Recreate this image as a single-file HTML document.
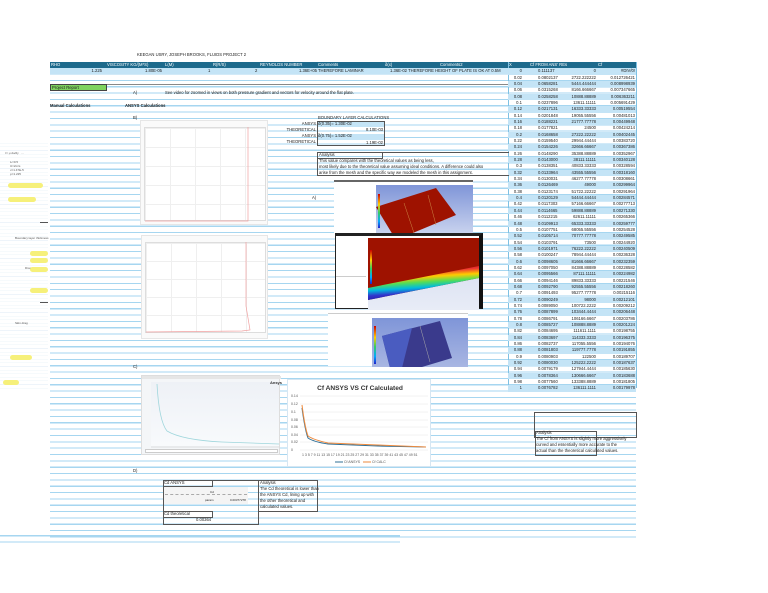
<!DOCTYPE html>
<html><head><meta charset="utf-8"><style>
*{margin:0;padding:0;box-sizing:border-box}
body{width:768px;height:593px;background:#fff;position:relative;overflow:hidden;font-family:"Liberation Sans",sans-serif;font-size:4.2px;color:#222}
.a{position:absolute;white-space:nowrap;line-height:6px}
.grid{position:absolute;background:repeating-linear-gradient(to bottom,transparent 0,transparent 5.2px,#a6d6f0 5.2px,#a6d6f0 6.34px)}
.hd{background:#1d6a8c;color:#fff;height:6.3px}
.tr{position:absolute;left:508px;width:128px;height:6.34px;line-height:6px}
.tr span{position:absolute;text-align:right}
.c1{right:114px}.c2{left:30px}.c3{right:40px}.c4{right:1px}
.b{background:#c4e4f6}
.box{position:absolute;border:1px solid #555}
</style></head><body>
<div class="grid" style="left:50px;top:62px;width:586px;height:480px"></div>
<div class="grid" style="left:0;top:530px;width:400px;height:14px"></div>
<div class="a" style="left:137px;top:52px">KEEGAN USRY, JOSEPH BROOKS, FLUIDS PROJECT 2</div>
<div class="a hd" style="left:50px;top:62px;width:586px"></div>
<div class="a" style="color:#fff;left:51px;top:62px">RHO</div>
<div class="a" style="color:#fff;left:107px;top:62px">VISCOSITY KG/(M*S)</div>
<div class="a" style="color:#fff;left:165px;top:62px">L(M)</div>
<div class="a" style="color:#fff;left:213px;top:62px">R(R/S)</div>
<div class="a" style="color:#fff;left:260px;top:62px">REYNOLDS NUMBER</div>
<div class="a" style="color:#fff;left:318px;top:62px">Comments</div>
<div class="a" style="color:#fff;left:385px;top:62px">δ(x)</div>
<div class="a" style="color:#fff;left:440px;top:62px">Comments2</div>
<div class="a" style="color:#fff;left:509px;top:62px">X</div>
<div class="a" style="color:#fff;left:530px;top:62px">Cf FROM ANS' REs</div>
<div class="a" style="color:#fff;left:598px;top:62px">Cf</div>
<div class="a b" style="left:50px;top:68.3px;width:458px;height:5.6px"></div>
<div class="a" style="left:90px;top:68px;width:12px;text-align:right">1.225</div>
<div class="a" style="left:140px;top:68px;width:22px;text-align:right">1.80E-05</div>
<div class="a" style="left:208px;top:68px">1</div>
<div class="a" style="left:255px;top:68px">2</div>
<div class="a" style="left:290px;top:68px;width:27px;text-align:right">1.36E+05</div>
<div class="a" style="left:318px;top:68px">THEREFORE LAMINAR</div>
<div class="a" style="left:390px;top:68px">1.36E-02 THEREFORE HEIGHT OF PLATE IS OK AT 0.5M</div>
<div style="position:absolute;left:508px;top:62px;width:129px;height:326px;border:1px solid #7fc1e3;border-top:0"></div>
<div class="tr b" style="top:68.3px"><span class="c1">0</span><span class="c2">0.111137</span><span class="c3">0</span><span class="c4">#DIV/0!</span></div>
<div class="tr" style="top:74.7px"><span class="c1">0.02</span><span class="c2">0.0802137</span><span class="c3">2722.222222</span><span class="c4">0.012726421</span></div>
<div class="tr b" style="top:81.0px"><span class="c1">0.04</span><span class="c2">0.0658281</span><span class="c3">5444.444444</span><span class="c4">0.008998939</span></div>
<div class="tr" style="top:87.3px"><span class="c1">0.06</span><span class="c2">0.0315268</span><span class="c3">8166.666667</span><span class="c4">0.007347665</span></div>
<div class="tr b" style="top:93.7px"><span class="c1">0.08</span><span class="c2">0.0258258</span><span class="c3">10888.88889</span><span class="c4">0.006363211</span></div>
<div class="tr" style="top:100.0px"><span class="c1">0.1</span><span class="c2">0.0237896</span><span class="c3">13611.11111</span><span class="c4">0.005691429</span></div>
<div class="tr b" style="top:106.3px"><span class="c1">0.12</span><span class="c2">0.0217131</span><span class="c3">16333.33333</span><span class="c4">0.00519554</span></div>
<div class="tr" style="top:112.7px"><span class="c1">0.14</span><span class="c2">0.0201848</span><span class="c3">19055.55556</span><span class="c4">0.00481013</span></div>
<div class="tr b" style="top:119.0px"><span class="c1">0.16</span><span class="c2">0.0188221</span><span class="c3">21777.77778</span><span class="c4">0.00449948</span></div>
<div class="tr" style="top:125.4px"><span class="c1">0.18</span><span class="c2">0.0177821</span><span class="c3">24500</span><span class="c4">0.00424214</span></div>
<div class="tr b" style="top:131.7px"><span class="c1">0.2</span><span class="c2">0.0168658</span><span class="c3">27222.22222</span><span class="c4">0.00402445</span></div>
<div class="tr" style="top:138.0px"><span class="c1">0.22</span><span class="c2">0.0159540</span><span class="c3">29944.44444</span><span class="c4">0.00383720</span></div>
<div class="tr b" style="top:144.4px"><span class="c1">0.24</span><span class="c2">0.0154226</span><span class="c3">32666.66667</span><span class="c4">0.00367386</span></div>
<div class="tr" style="top:150.7px"><span class="c1">0.26</span><span class="c2">0.0148290</span><span class="c3">35388.88889</span><span class="c4">0.00352967</span></div>
<div class="tr b" style="top:157.1px"><span class="c1">0.28</span><span class="c2">0.0143000</span><span class="c3">38111.11111</span><span class="c4">0.00340128</span></div>
<div class="tr" style="top:163.4px"><span class="c1">0.3</span><span class="c2">0.0138351</span><span class="c3">40833.33333</span><span class="c4">0.00328594</span></div>
<div class="tr b" style="top:169.7px"><span class="c1">0.32</span><span class="c2">0.0133964</span><span class="c3">43555.55556</span><span class="c4">0.00318160</span></div>
<div class="tr" style="top:176.1px"><span class="c1">0.34</span><span class="c2">0.0130031</span><span class="c3">46277.77778</span><span class="c4">0.00308661</span></div>
<div class="tr b" style="top:182.4px"><span class="c1">0.36</span><span class="c2">0.0126469</span><span class="c3">49000</span><span class="c4">0.00299964</span></div>
<div class="tr" style="top:188.8px"><span class="c1">0.38</span><span class="c2">0.0123174</span><span class="c3">51722.22222</span><span class="c4">0.00291964</span></div>
<div class="tr b" style="top:195.1px"><span class="c1">0.4</span><span class="c2">0.0120129</span><span class="c3">54444.44444</span><span class="c4">0.00284571</span></div>
<div class="tr" style="top:201.4px"><span class="c1">0.42</span><span class="c2">0.0117303</span><span class="c3">57166.66667</span><span class="c4">0.00277713</span></div>
<div class="tr b" style="top:207.8px"><span class="c1">0.44</span><span class="c2">0.0114665</span><span class="c3">59888.88889</span><span class="c4">0.00271330</span></div>
<div class="tr" style="top:214.1px"><span class="c1">0.46</span><span class="c2">0.0112215</span><span class="c3">62611.11111</span><span class="c4">0.00265366</span></div>
<div class="tr b" style="top:220.5px"><span class="c1">0.48</span><span class="c2">0.0109913</span><span class="c3">65333.33333</span><span class="c4">0.00259777</span></div>
<div class="tr" style="top:226.8px"><span class="c1">0.5</span><span class="c2">0.0107751</span><span class="c3">68055.55556</span><span class="c4">0.00254528</span></div>
<div class="tr b" style="top:233.1px"><span class="c1">0.52</span><span class="c2">0.0105714</span><span class="c3">70777.77778</span><span class="c4">0.00249585</span></div>
<div class="tr" style="top:239.5px"><span class="c1">0.54</span><span class="c2">0.0103791</span><span class="c3">73500</span><span class="c4">0.00244920</span></div>
<div class="tr b" style="top:245.8px"><span class="c1">0.56</span><span class="c2">0.0101971</span><span class="c3">76222.22222</span><span class="c4">0.00240509</span></div>
<div class="tr" style="top:252.2px"><span class="c1">0.58</span><span class="c2">0.0100247</span><span class="c3">78944.44444</span><span class="c4">0.00236328</span></div>
<div class="tr b" style="top:258.5px"><span class="c1">0.6</span><span class="c2">0.0098605</span><span class="c3">81666.66667</span><span class="c4">0.00232359</span></div>
<div class="tr" style="top:264.8px"><span class="c1">0.62</span><span class="c2">0.0097050</span><span class="c3">84388.88889</span><span class="c4">0.00228582</span></div>
<div class="tr b" style="top:271.2px"><span class="c1">0.64</span><span class="c2">0.0095566</span><span class="c3">87111.11111</span><span class="c4">0.00224982</span></div>
<div class="tr" style="top:277.5px"><span class="c1">0.66</span><span class="c2">0.0094146</span><span class="c3">89833.33333</span><span class="c4">0.00221546</span></div>
<div class="tr b" style="top:283.9px"><span class="c1">0.68</span><span class="c2">0.0092790</span><span class="c3">92555.55556</span><span class="c4">0.00218260</span></div>
<div class="tr" style="top:290.2px"><span class="c1">0.7</span><span class="c2">0.0091493</span><span class="c3">95277.77778</span><span class="c4">0.00215116</span></div>
<div class="tr b" style="top:296.5px"><span class="c1">0.72</span><span class="c2">0.0090249</span><span class="c3">98000</span><span class="c4">0.00212101</span></div>
<div class="tr" style="top:302.9px"><span class="c1">0.74</span><span class="c2">0.0089050</span><span class="c3">100722.2222</span><span class="c4">0.00209212</span></div>
<div class="tr b" style="top:309.2px"><span class="c1">0.76</span><span class="c2">0.0087899</span><span class="c3">103444.4444</span><span class="c4">0.00206448</span></div>
<div class="tr" style="top:315.6px"><span class="c1">0.78</span><span class="c2">0.0086791</span><span class="c3">106166.6667</span><span class="c4">0.00203786</span></div>
<div class="tr b" style="top:321.9px"><span class="c1">0.8</span><span class="c2">0.0085727</span><span class="c3">108888.8889</span><span class="c4">0.00201224</span></div>
<div class="tr" style="top:328.2px"><span class="c1">0.82</span><span class="c2">0.0084695</span><span class="c3">111611.1111</span><span class="c4">0.00198755</span></div>
<div class="tr b" style="top:334.6px"><span class="c1">0.84</span><span class="c2">0.0083697</span><span class="c3">114333.3333</span><span class="c4">0.00196375</span></div>
<div class="tr" style="top:340.9px"><span class="c1">0.86</span><span class="c2">0.0082737</span><span class="c3">117055.5556</span><span class="c4">0.00194076</span></div>
<div class="tr b" style="top:347.3px"><span class="c1">0.88</span><span class="c2">0.0081803</span><span class="c3">119777.7778</span><span class="c4">0.00191855</span></div>
<div class="tr" style="top:353.6px"><span class="c1">0.9</span><span class="c2">0.0080903</span><span class="c3">122500</span><span class="c4">0.00189707</span></div>
<div class="tr b" style="top:359.9px"><span class="c1">0.92</span><span class="c2">0.0080030</span><span class="c3">125222.2222</span><span class="c4">0.00187637</span></div>
<div class="tr" style="top:366.3px"><span class="c1">0.94</span><span class="c2">0.0079179</span><span class="c3">127944.4444</span><span class="c4">0.00185630</span></div>
<div class="tr b" style="top:372.6px"><span class="c1">0.96</span><span class="c2">0.0078364</span><span class="c3">130666.6667</span><span class="c4">0.00183688</span></div>
<div class="tr" style="top:379.0px"><span class="c1">0.98</span><span class="c2">0.0077560</span><span class="c3">133388.8889</span><span class="c4">0.00181805</span></div>
<div class="tr b" style="top:385.3px"><span class="c1">1</span><span class="c2">0.0076782</span><span class="c3">136111.1111</span><span class="c4">0.00179978</span></div>

<div class="a" style="left:50px;top:84px;width:57px;height:6.5px;background:#7fd35f;border:1px solid #444;line-height:5px;padding-left:1px">Project Report</div>
<div class="a" style="left:107px;top:84px;width:401px;height:1px;background:#888"></div>
<div class="a" style="left:133px;top:90px">A)</div>
<div class="a" style="left:165px;top:90px">See video for zoomed in views on both pressure gradient and vectors for velocity around the flat plate.</div>
<div class="a" style="left:50px;top:103px;font-weight:bold">Manual Calculations</div>
<div class="a" style="left:125px;top:103px;font-weight:bold">ANSYS Calculations</div>
<div class="a" style="left:133px;top:115px">B)</div>
<div class="a" style="left:318px;top:115px">BOUNDARY LAYER CALCULATIONS</div>
<div class="a" style="left:280px;top:121px;width:36px;text-align:right">ANSYS</div>
<div class="a" style="left:270px;top:127px;width:46px;text-align:right">THEORETICAL</div>
<div class="a" style="left:280px;top:133px;width:36px;text-align:right">ANSYS</div>
<div class="a" style="left:270px;top:139px;width:46px;text-align:right">THEORETICAL</div>
<div class="a b" style="left:317px;top:121px;width:67px;height:5.5px"></div>
<div class="a b" style="left:317px;top:134px;width:67px;height:5.5px"></div>
<div class="box" style="left:317px;top:121px;width:68px;height:25px"></div>
<div class="a" style="left:318px;top:121px">δ(0.35)= 1.30E-02</div>
<div class="a" style="left:350px;top:127px;width:33px;text-align:right">8.10E-03</div>
<div class="a" style="left:318px;top:133px">δ(0.75)= 1.52E-02</div>
<div class="a" style="left:350px;top:140px;width:33px;text-align:right">1.19E-02</div>
<div class="box" style="left:317px;top:152px;width:66px;height:6.5px"></div>
<div class="box" style="left:317px;top:152px;width:192px;height:24px;border-width:1px 0 1px 1px"></div>
<div class="a" style="left:319px;top:152px">Analysis</div>
<div class="a" style="left:319px;top:158px">This value compares with the theoretical values as being less,</div>
<div class="a" style="left:319px;top:164px">most likely due to the theoretical value assuming ideal conditions. A difference could also</div>
<div class="a" style="left:319px;top:170px">arise from the mesh and the specific way we modeled the mesh in this assignment.</div>
<div class="a" style="left:312px;top:195px">A)</div>

<div style="position:absolute;left:0;top:140px;width:48px;height:250px;background:repeating-linear-gradient(to bottom,#fff 0,#fff 3px,#eef4fa 3px,#eef4fa 3.6px)"></div>
<div class="a" style="left:5px;top:150px;font-size:3px;color:#555">τ= μ du/dy &nbsp; ...</div>
<div class="a" style="left:10px;top:160px;font-size:3px;color:#555;line-height:4px">Lᵢ=0.5<br>U=2m/s<br>ν=1.47E-5<br>ρ=1.225</div>
<div class="a" style="left:8px;top:183px;width:35px;height:5px;background:#f6f07a;border-radius:3px"></div>
<div class="a" style="left:8px;top:197px;width:28px;height:5px;background:#f6f07a;border-radius:3px"></div>
<div class="a" style="left:40px;top:222px;width:8px;height:1px;background:#555"></div>
<div class="a" style="left:15px;top:235px;font-size:3px;color:#555">Boundary layer thickness</div>
<div class="a" style="left:30px;top:251px;width:18px;height:5px;background:#f6f07a;border-radius:3px"></div>
<div class="a" style="left:30px;top:258px;width:18px;height:5px;background:#f6f07a;border-radius:3px"></div>
<div class="a" style="left:25px;top:265px;font-size:3px;color:#555">Drag coefficient</div>
<div class="a" style="left:30px;top:267px;width:18px;height:5px;background:#f6f07a;border-radius:3px"></div>
<div class="a" style="left:30px;top:288px;width:18px;height:5px;background:#f6f07a;border-radius:3px"></div>
<div class="a" style="left:40px;top:302px;width:8px;height:1px;background:#555"></div>
<div class="a" style="left:15px;top:320px;font-size:3px;color:#555">Skin drag</div>
<div class="a" style="left:10px;top:355px;width:22px;height:5px;background:#f6f07a;border-radius:3px"></div>
<div class="a" style="left:3px;top:380px;width:16px;height:5px;background:#f6f07a;border-radius:3px"></div>

<div style="position:absolute;left:140px;top:120px;width:128px;height:105px;background:#fafafa;border:1px solid #e6e6e6">
 <div style="position:absolute;left:3px;top:6px;width:122px;height:94px;background:#fff;border:1px solid #ddd;background-image:linear-gradient(to right,#efefef 1px,transparent 1px),linear-gradient(to bottom,#efefef 1px,transparent 1px);background-size:25px 100%,100% 19px"></div>
 <svg style="position:absolute;left:0;top:0" width="128" height="105"><path d="M107 6 L107 100 L4 100" stroke="#f0a0a0" stroke-width="0.7" fill="none"/></svg>
</div>
<div style="position:absolute;left:141px;top:235px;width:127px;height:104px;background:#fafafa;border:1px solid #e6e6e6">
 <div style="position:absolute;left:3px;top:6px;width:121px;height:91px;background:#fff;border:1px solid #ddd;background-image:linear-gradient(to right,#efefef 1px,transparent 1px),linear-gradient(to bottom,#efefef 1px,transparent 1px);background-size:25px 100%,100% 18px"></div>
 <svg style="position:absolute;left:0;top:0" width="127" height="104"><path d="M4 96 L100 95 L108 94 L104 70 L104 6" stroke="#f0a0a0" stroke-width="0.7" fill="none"/></svg>
</div>

<div style="position:absolute;left:334px;top:180px;width:139px;height:53px;background:#fff;border-top:2px solid #666">
 <div style="position:absolute;left:42px;top:3px;width:97px;height:48px;background:linear-gradient(#7f95d8,#c8d2ee)"></div>
 <svg style="position:absolute;left:42px;top:3px" width="97" height="48"><polygon points="0,22 60,3 80,30 20,55" fill="#9e1200"/><line x1="28" y1="18" x2="38" y2="48" stroke="#c84" stroke-width=".5"/><line x1="52" y1="10" x2="60" y2="40" stroke="#c84" stroke-width=".5"/><rect x="2" y="9" width="2" height="34" fill="url(#rb)"/></svg>
</div>
<svg width="0" height="0" style="position:absolute"><defs><linearGradient id="rb" x1="0" y1="0" x2="0" y2="1"><stop offset="0" stop-color="#c00"/><stop offset=".3" stop-color="#fc0"/><stop offset=".55" stop-color="#3c6"/><stop offset=".8" stop-color="#0af"/><stop offset="1" stop-color="#22c"/></linearGradient><linearGradient id="rb2" x1="0" y1="0" x2="0.2" y2="1"><stop offset="0" stop-color="#9e1200"/><stop offset=".25" stop-color="#e33"/><stop offset=".4" stop-color="#fc0"/><stop offset=".55" stop-color="#5d5"/><stop offset=".7" stop-color="#0bd"/><stop offset=".85" stop-color="#33c"/><stop offset="1" stop-color="#22a"/></linearGradient></defs></svg>
<div style="position:absolute;left:335px;top:233px;width:148px;height:76px;background:#fff;border:1px solid #222;border-right:4px solid #111;border-top:3px solid #222">
 <div style="position:absolute;left:32px;top:2px;width:111px;height:72px;background:linear-gradient(#d0d8f0,#e8ecf6)"></div>
 <svg style="position:absolute;left:32px;top:2px" width="111" height="72"><polygon points="0,0 111,0 111,40 0,62" fill="#9e1200"/><polygon points="0,50 111,28 111,40 0,62" fill="url(#rb2)"/><rect x="2" y="12" width="2" height="34" fill="url(#rb)"/></svg>
 <div style="position:absolute;left:0;top:40px;width:30px;height:1px;background:#ccc"></div>
</div>
<div style="position:absolute;left:328px;top:313px;width:140px;height:53px;background:#fff;border-top:1px solid #ccc">
 <div style="position:absolute;left:44px;top:4px;width:96px;height:49px;background:linear-gradient(#7f95d8,#a8b6e2)"></div>
 <svg style="position:absolute;left:44px;top:4px" width="96" height="49"><polygon points="10,18 68,3 80,40 20,58" fill="#3a3a8c"/><polygon points="10,18 40,10 30,50 20,58" fill="#4a5cc0"/><line x1="48" y1="8" x2="58" y2="44" stroke="#aaa" stroke-width=".5"/><rect x="2" y="8" width="2" height="38" fill="url(#rb)"/></svg>
</div>
<div class="a" style="left:133px;top:364px">C)</div>

<div style="position:absolute;left:141px;top:375px;width:139px;height:80px;background:#f4f6f8;border:1px solid #ddd">
 <div style="position:absolute;left:0;top:0;width:139px;height:3px;background:#e6e6e6"></div>
 <div style="position:absolute;left:9px;top:6px;width:128px;height:64px;background:linear-gradient(#eef1f6,#f8fafc)"></div>
 <div style="position:absolute;left:128px;top:4px;font-size:4px;font-weight:bold;color:#333">Ansys</div>
 <svg style="position:absolute;left:0;top:0" width="139" height="80"><path d="M15 8 Q17 45 25 55 Q40 64 80 66 L137 68" stroke="#9fd6dc" stroke-width="0.8" fill="none"/><line x1="9" y1="71" x2="137" y2="71" stroke="#bbb" stroke-width=".4"/></svg>
 <div style="position:absolute;left:3px;top:73px;width:133px;height:4px;border:1px solid #ccc;background:#fff"></div>
</div>

<div style="position:absolute;left:287px;top:379px;width:144px;height:88px;background:#fff;border:1px solid #d6e6f2">
 <div class="a" style="left:0;width:144px;text-align:center;top:5px;font-size:6.6px;font-weight:bold;color:#333;line-height:8px">Cf ANSYS VS Cf Calculated</div>
 <svg style="position:absolute;left:0;top:0" width="144" height="88" font-family="Liberation Sans" font-size="3.5" fill="#555">
  <g stroke="#e6e6e6" stroke-width=".5">
   <line x1="12" y1="16" x2="140" y2="16"/><line x1="12" y1="24" x2="140" y2="24"/><line x1="12" y1="32" x2="140" y2="32"/><line x1="12" y1="40" x2="140" y2="40"/><line x1="12" y1="47" x2="140" y2="47"/><line x1="12" y1="55" x2="140" y2="55"/><line x1="12" y1="62" x2="140" y2="62"/><line x1="12" y1="70" x2="140" y2="70"/>
  </g>
  <text x="3" y="17">0.14</text><text x="3" y="25">0.12</text><text x="3" y="33">0.1</text><text x="3" y="41">0.08</text><text x="3" y="48">0.06</text><text x="3" y="56">0.04</text><text x="3" y="63">0.02</text><text x="3" y="71">0</text>
  <text x="14" y="76">1 3 5 7 9 11 13 15 17 19 21 23 25 27 29 31 33 35 37 39 41 43 45 47 49 51</text>
  <path d="M14 28 Q17 50 20 58 Q26 62 40 64 L90 66 L138 67" stroke="#2f6f96" stroke-width="1" fill="none"/>
  <path d="M14 25 Q17 48 20 56 Q26 60 40 63 L90 65 L138 67" stroke="#ee8a3d" stroke-width="1" fill="none"/>
  <line x1="47" y1="82" x2="55" y2="82" stroke="#2f6f96" stroke-width="1"/><text x="56" y="83">Cf ANSYS</text>
  <line x1="75" y1="82" x2="83" y2="82" stroke="#ee8a3d" stroke-width="1"/><text x="84" y="83">Cf CALC</text>
 </svg>
</div>

<div class="box" style="left:534px;top:412px;width:103px;height:26px"></div>
<div class="box" style="left:535px;top:431px;width:62px;height:25px"></div>
<div class="a" style="left:536px;top:430px">Analysis</div>
<div class="a" style="left:536px;top:436px">The Cf from ANSYS is slightly more aggressively</div>
<div class="a" style="left:536px;top:442px">curved and essentially more accurate to the</div>
<div class="a" style="left:536px;top:448px">actual than the theoretical calculated values.</div>

<div class="a" style="left:133px;top:468px">D)</div>
<div class="box" style="left:163px;top:480px;width:96px;height:45px"></div>
<div class="box" style="left:163px;top:480px;width:50px;height:7px"></div>
<div class="a" style="left:164px;top:480px">Cd ANSYS</div>
<div style="position:absolute;left:164px;top:487px;width:84px;height:17px;background:#f4f4f4"></div>
<div class="a" style="left:210px;top:489px;font-size:3px">Cd</div>
<div style="position:absolute;left:165px;top:494px;width:50px;border-top:1px dashed #aaa"></div>
<div style="position:absolute;left:217px;top:494px;width:30px;border-top:1px dashed #aaa"></div>
<div class="a" style="left:205px;top:497px;font-size:3px">param</div>
<div class="a" style="left:230px;top:497px;font-size:3px">0.00377278</div>
<div class="box" style="left:163px;top:511px;width:50px;height:7px"></div>
<div class="a" style="left:164px;top:511px">Cd theoretical</div>
<div class="a" style="left:196px;top:517px">0.00364</div>
<div class="box" style="left:258px;top:480px;width:60px;height:32px"></div>
<div class="a" style="left:260px;top:480px">Analysis</div>
<div class="a" style="left:260px;top:486px">The Cd theoretical is lower than</div>
<div class="a" style="left:260px;top:492px">the ANSYS Cd, lining up with</div>
<div class="a" style="left:260px;top:498px">the other theoretical and</div>
<div class="a" style="left:260px;top:504px">calculated values.</div>
</body></html>
